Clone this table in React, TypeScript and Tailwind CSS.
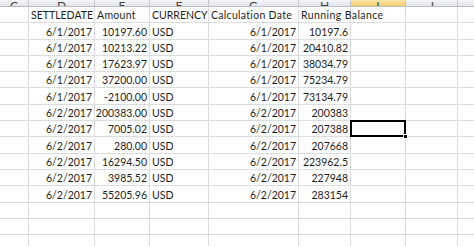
import React from 'react';

const cols = [
  { letter: 'C', w: 'w-[29px]' },
  { letter: 'D', w: 'w-[66px]' },
  { letter: 'E', w: 'w-[55px]' },
  { letter: 'F', w: 'w-[59px]' },
  { letter: 'G', w: 'w-[90px]' },
  { letter: 'H', w: 'w-[52px]' },
  { letter: 'I', w: 'w-[55px]' },
  { letter: 'J', w: 'w-[52px]' },
  { letter: 'K', w: 'w-[40px]' },
];

type Row = [string, string, string, string, string];

const rows: Row[] = [
  ['6/1/2017', '10197.60', 'USD', '6/1/2017', '10197.6'],
  ['6/1/2017', '10213.22', 'USD', '6/1/2017', '20410.82'],
  ['6/1/2017', '17623.97', 'USD', '6/1/2017', '38034.79'],
  ['6/1/2017', '37200.00', 'USD', '6/1/2017', '75234.79'],
  ['6/1/2017', '-2100.00', 'USD', '6/1/2017', '73134.79'],
  ['6/2/2017', '200383.00', 'USD', '6/2/2017', '200383'],
  ['6/2/2017', '7005.02', 'USD', '6/2/2017', '207388'],
  ['6/2/2017', '280.00', 'USD', '6/2/2017', '207668'],
  ['6/2/2017', '16294.50', 'USD', '6/2/2017', '223962.5'],
  ['6/2/2017', '3985.52', 'USD', '6/2/2017', '227948'],
  ['6/2/2017', '55205.96', 'USD', '6/2/2017', '283154'],
];

function Cell({ w, children, right, selected }: { w: string; children?: React.ReactNode; right?: boolean; selected?: boolean }) {
  return (
    <div
      className={`${w} shrink-0 h-full border-r border-[#dadcdd] px-[2px] overflow-visible whitespace-nowrap flex items-center pt-[3px] ${right ? 'justify-end' : 'justify-start'} ${selected ? 'relative' : ''}`}
    >
      {children}
      {selected && (
        <div className="absolute -left-px -top-px -right-px -bottom-px border-2 border-black">
          <div className="absolute -right-[4px] -bottom-[4px] w-[5px] h-[5px] bg-black border border-white" />
        </div>
      )}
    </div>
  );
}

export default function App() {
  return (
    <div
      className="w-[474px] h-[246px] overflow-hidden bg-white text-[#1e1e1e] text-[10.5px]"
      style={{ fontFamily: 'Lato, "Liberation Sans", sans-serif' }}
    >
      {/* column letters, cut off at the top */}
      <div className="flex h-[7px] overflow-hidden border-b border-[#b9bec5] bg-gradient-to-b from-[#f4f5f7] to-[#e2e5ea]">
        {cols.map((c) => (
          <div
            key={c.letter}
            className={`${c.w} shrink-0 h-full border-r border-[#c6cad0] flex items-end justify-center text-[12px] text-[#444] leading-[6px] ${c.letter === 'I' ? 'bg-gradient-to-b from-[#f9e3a6] to-[#f4cd6b]' : ''}`}
          >
            <span className="-mb-[3px]">{c.letter}</span>
          </div>
        ))}
      </div>

      {/* header row */}
      <div className="flex h-[16.3px] border-b border-[#dadcdd]">
        <Cell w={cols[0].w} />
        <Cell w={cols[1].w}>SETTLEDATE</Cell>
        <Cell w={cols[2].w}><span className="tracking-[0.3px]">Amount</span></Cell>
        <Cell w={cols[3].w}>CURRENCY</Cell>
        <Cell w={cols[4].w}><span className="tracking-[0.3px]">Calculation Date</span></Cell>
        <Cell w={cols[5].w}><span className="tracking-[0.4px]">Running Balance</span></Cell>
        <Cell w={cols[6].w} />
        <Cell w={cols[7].w} />
        <Cell w={cols[8].w} />
      </div>

      {rows.map((r, i) => (
        <div key={i} className="flex h-[16.3px] border-b border-[#dadcdd]">
          <Cell w={cols[0].w} />
          <Cell w={cols[1].w} right>{r[0]}</Cell>
          <Cell w={cols[2].w} right>{r[1]}</Cell>
          <Cell w={cols[3].w}>{r[2]}</Cell>
          <Cell w={cols[4].w} right>{r[3]}</Cell>
          <Cell w={cols[5].w} right>{r[4]}</Cell>
          <Cell w={cols[6].w} selected={i === 6} />
          <Cell w={cols[7].w} />
          <Cell w={cols[8].w} />
        </div>
      ))}

      {[0, 1, 2].map((i) => (
        <div key={`e${i}`} className="flex h-[16.3px] border-b border-[#dadcdd]">
          {cols.map((c) => (
            <Cell key={c.letter} w={c.w} />
          ))}
        </div>
      ))}
    </div>
  );
}
